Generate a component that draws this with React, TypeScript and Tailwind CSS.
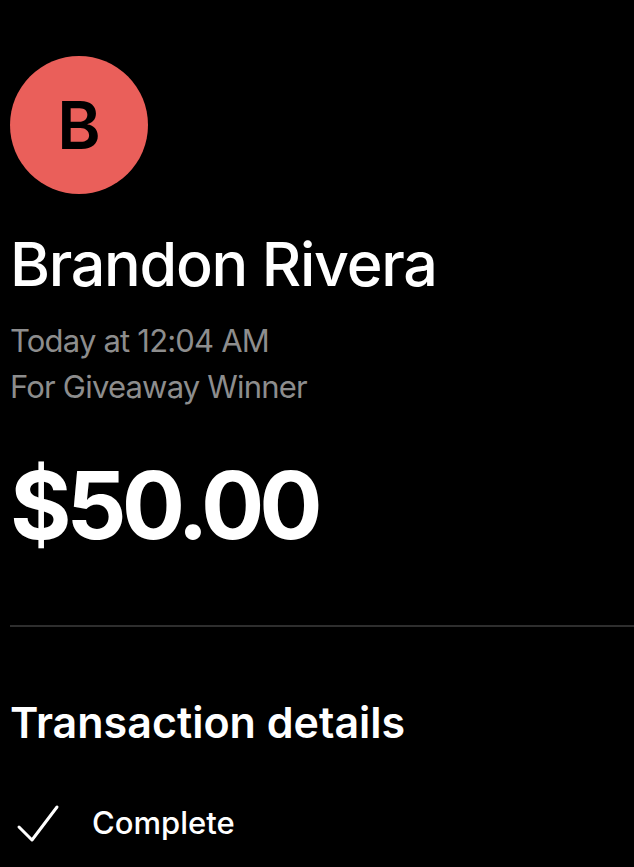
import React from 'react'

const App = () => {
  return (
    <div className="min-h-[867px] w-full bg-black text-white font-['Inter','Liberation_Sans',sans-serif] pl-[10px] pt-[56px]">
      <div className="flex h-[138px] w-[138px] items-center justify-center rounded-full bg-[#ea5f5a]">
        <span className="text-[66px] font-semibold leading-none text-black">B</span>
      </div>

      <h1 className="mt-[34px] text-[61px] font-medium leading-[72px] tracking-[-1.3px]">Brandon Rivera</h1>

      <div className="mt-[18px] text-[31px] leading-[46px] tracking-[-0.8px] text-[#8d8d8d]">
        <p>Today at 12:04 AM</p>
        <p>For Giveaway Winner</p>
      </div>

      <p className="mt-[40px] text-[94px] font-bold leading-[110px] tracking-[-5px]">$50.00</p>

      <div className="mt-[65px] h-[2px] bg-[#2e2e2e]" />

      <h2 className="mt-[70px] text-[43px] font-semibold leading-[50px] tracking-[0px]">Transaction details</h2>

      <div className="mt-[56px] flex items-center gap-[32px]">
        <svg width="44" height="40" viewBox="0 0 44 40" fill="none" className="ml-[6px]">
          <path d="M3 24 L16 37 L41 4" stroke="white" strokeWidth="3" strokeLinecap="round" strokeLinejoin="round" />
        </svg>
        <span className="text-[31px] font-medium leading-[40px]">Complete</span>
      </div>
    </div>
  )
}

export default App
